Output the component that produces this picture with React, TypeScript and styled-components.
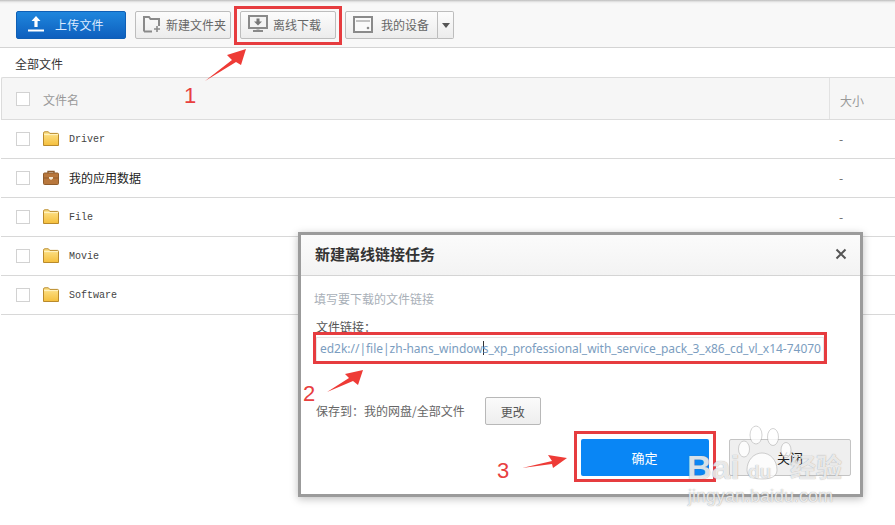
import React from "react";
import styled, { createGlobalStyle } from "styled-components";

const Global = createGlobalStyle`
  html, body { margin: 0; padding: 0; background: #fff; }
  body { font-family: "Noto Sans CJK SC", "Liberation Sans", sans-serif; font-size: 12px; color: #555; }
`;
const CJK = `"Noto Sans CJK SC", "Liberation Sans", sans-serif`;

const Page = styled.div`
  position: relative; width: 895px; height: 525px; overflow: hidden; background: #fff;
`;
const Toolbar = styled.div`
  height: 48px; box-sizing: border-box; padding: 11px 0 0 16px; display: flex; gap: 9px; align-items: flex-start;
  background: linear-gradient(#bdbdbd 0, #ececec 2px, #f8f8f8 4px, #f8f8f8 100%);
  border-bottom: 1px solid #d4d4d4;
`;
const ToolButton = styled.div<{ $w: number; $joined?: boolean }>`
  width: ${p => p.$w}px; height: 28px; box-sizing: border-box; display: flex; align-items: center; gap: 5px;
  padding: 0 0 2px 7px; color: #666; font-size: 12px; white-space: nowrap;
  border: 1px solid #bdbdbd; border-radius: ${p => (p.$joined ? "2px 0 0 2px" : "2px")};
  background: linear-gradient(#fcfcfc, #ececec);
`;
const UploadButton = styled(ToolButton)`
  color: #dceaff; border-color: #0f5fb5; padding-left: 10px; gap: 10px; font-size: 12px; letter-spacing: .2px;
  background: linear-gradient(#1f86dd, #0e5fbe);
`;
const SplitGroup = styled.div`display: flex;`;
const Caret = styled.div`
  width: 16px; height: 28px; box-sizing: border-box; display: flex; align-items: center; justify-content: center;
  border: 1px solid #bdbdbd; border-left: 0; border-radius: 0 2px 2px 0; background: linear-gradient(#fcfcfc, #ececec);
  &::after { content: ""; border: 4px solid transparent; border-top: 5px solid #555; border-bottom: 0; }
`;
const Crumb = styled.div`
  height: 29px; box-sizing: border-box; padding: 8px 0 0 15px; font-size: 12px; line-height: 16px; color: #333;
`;
const Head = styled.div`
  height: 43px; box-sizing: border-box; margin-left: 1px; display: flex; align-items: center;
  background: #f6f6f6; border: 1px solid #dcdcdc; border-right: 0; border-radius: 2px 0 0 0; color: #999; padding-left: 14px;
`;
const Check = styled.span`
  width: 14px; height: 14px; box-sizing: border-box; flex: none; background: #fff; border: 1px solid #d2d2d2;
`;
const HeadName = styled.span`margin-left: 13px; flex: 1; font-size: 12px; padding-top: 2px;`;
const HeadSize = styled.span`
  width: 66px; height: 100%; box-sizing: border-box; border-left: 1px solid #e2e2e2; padding: 15px 0 0 10px; line-height: 16px;
`;
const Row = styled.div`
  height: 39px; box-sizing: border-box; margin-left: 1px; padding-left: 15px; display: flex; align-items: center;
  border-bottom: 1px solid #d8d8d8;
`;
const IconSlot = styled.span`margin-left: 13px; width: 16px; height: 16px; flex: none; display: flex;`;
const RowName = styled.span<{ $cjk?: boolean }>`
  margin-left: 10px; flex: 1; color: ${p => (p.$cjk ? "#222" : "#444")};
  font: ${p => (p.$cjk ? `12px ${CJK}` : `10px "Liberation Mono", monospace`)};
  padding: ${p => (p.$cjk ? "0 0 2px" : "1px 0 0")};
`;
const RowSize = styled.span`width: 56px; color: #666; padding-bottom: 2px;`;

const Dialog = styled.div`
  position: absolute; left: 298px; top: 232px; width: 565px; height: 265px; box-sizing: border-box;
  border: 3px solid #9b9b9b; background: #fff; box-shadow: 0 2px 8px rgba(0,0,0,.25);
  display: flex; flex-direction: column;
`;
const DialogHead = styled.div`
  height: 41px; flex: none; box-sizing: border-box; display: flex; align-items: center; justify-content: space-between;
  padding: 0 13px 3px 14px; border-bottom: 1px solid #d4d4d4; background: linear-gradient(#fbfbfb, #f3f3f3);
`;
const DialogTitle = styled.span`font-size: 15px; font-weight: 700; color: #333;`;
const DialogBody = styled.div`padding: 14px 0 0 13px; flex: 1; display: flex; flex-direction: column;`;
const Hint = styled.div`color: #a9b0b8; font-size: 12px; line-height: 18px;`;
const Label = styled.div`margin: 11px 0 0 2px; color: #555; font-size: 12px; line-height: 16px;`;
const LinkField = styled.div`
  margin: 2px 0 0 2px; width: 508px; height: 26px; box-sizing: border-box; display: flex; align-items: center; padding: 0 0 4px 3px;
  border: 1px solid #e6e6e6; color: #7b9dc0; font: 12px "Noto Sans", sans-serif; white-space: nowrap; letter-spacing: -0.02px;
`;
const TextCaret = styled.i`display: inline-block; width: 1px; height: 14px; margin-right: -1px; background: #333; vertical-align: -2px;`;
const SaveRow = styled.div`margin: 34px 0 0 2px; display: flex; align-items: center; gap: 20px; color: #666;`;
const SaveText = styled.span`padding-bottom: 2px;`;
const ChangeBtn = styled.div`
  width: 56px; height: 28px; box-sizing: border-box; display: flex; align-items: center; justify-content: center;
  border: 1px solid #b8b8b8; border-radius: 2px; background: linear-gradient(#fbfbfb, #eeeeee); color: #555;
`;
const Actions = styled.div`margin: 14px 0 0 267px; display: flex; gap: 20px;`;
const Primary = styled.div`
  width: 128px; height: 37px; box-sizing: border-box; padding-right: 1px; display: flex; align-items: center; justify-content: center;
  background: #0986f5; border-radius: 2px; color: #fff; font-size: 13px;
`;
const Secondary = styled.div`
  width: 122px; height: 37px; box-sizing: border-box; display: flex; align-items: center; justify-content: center;
  background: #efefef; border: 1px solid #c4c4c4; border-radius: 2px; color: #222; font-size: 13px;
`;
const RedFrame = styled.div<{ $x: number; $y: number; $w: number; $h: number }>`
  position: absolute; left: ${p => p.$x}px; top: ${p => p.$y}px; width: ${p => p.$w}px; height: ${p => p.$h}px;
  box-sizing: border-box; border: 3px solid #e63c3f;
`;
const Num = styled.span<{ $x: number; $y: number }>`
  position: absolute; left: ${p => p.$x}px; top: ${p => p.$y}px; color: #e8403f;
  font: 22px/24px "Liberation Sans", sans-serif;
`;
const Overlay = styled.svg`position: absolute; left: 0; top: 0; pointer-events: none;`;
const Mark = styled.span<{ $x: number; $y: number; $s: number; $light?: boolean }>`
  position: absolute; left: ${p => p.$x}px; top: ${p => p.$y}px; font-size: ${p => p.$s}px; line-height: 1;
  font-weight: ${p => (p.$light ? 400 : 700)};
  color: rgba(255,255,255,.78); white-space: nowrap; font-family: "Liberation Sans", ${CJK};
  text-shadow: 0 0 1px rgba(110,110,110,.7);
`;

const Folder = () => (
  <svg width="16" height="16" viewBox="0 0 16 16">
    <defs><linearGradient id="fg" x1="0" y1="0" x2="0" y2="1"><stop offset="0" stopColor="#fde48f" /><stop offset="1" stopColor="#f5bf3c" /></linearGradient></defs>
    <path d="M.5 2.2C.5 1.3 1 .8 1.8.8h3.6l1.4 1.6h7.7c.7 0 1 .4 1 1v11.1H.5z" fill="url(#fg)" stroke="#b98a2c" />
    <path d="M1 3.6h14" stroke="#fff3c4" />
  </svg>
);
const Case = () => (
  <svg width="16" height="16" viewBox="0 0 16 16">
    <path d="M5 3V1.5h6V3" fill="none" stroke="#8a5a2c" strokeWidth="1.4" />
    <rect x=".5" y="3" width="15" height="11.5" rx="1" fill="#b8773c" stroke="#8f5c2c" />
    <path d="M.5 8h15" stroke="#8f5c2c" />
    <path d="M6 7h4v1.5L8 10 6 8.5z" fill="#f5e8d2" />
  </svg>
);

const files = [
  { n: "Driver" }, { n: "我的应用数据", cjk: true, c: true }, { n: "File" }, { n: "Movie" }, { n: "Software" },
];

export default function App() {
  return (
    <Page>
      <Global />
      <Toolbar>
        <UploadButton $w={110}>
          <svg width="18" height="16" viewBox="0 0 18 16">
            <path d="M9 0l4.500 5H10.600v6H7.400V5H4.500z" fill="#fff" />
            <rect x="1" y="13.500" width="16" height="2" fill="#fff" />
          </svg>
          上传文件
        </UploadButton>
        <ToolButton $w={96}>
          <svg width="18" height="17" viewBox="0 0 18 17">
            <path d="M1 15.500V1h5l1.500 2H16v7" fill="none" stroke="#8a8a8a" strokeWidth="2" />
            <path d="M1 15.500h8" stroke="#8a8a8a" strokeWidth="2" />
            <path d="M14 10v6M11 13h6" stroke="#8a8a8a" strokeWidth="1.600" />
          </svg>
          新建文件夹
        </ToolButton>
        <ToolButton $w={96}>
          <svg width="20" height="18" viewBox="0 0 20 18">
            <rect x="1" y="1" width="18" height="12" fill="#f3f3f3" stroke="#8a8a8a" strokeWidth="2" />
            <path d="M8.500 3.500h3v3H14l-4 4-4-4h2.500z" fill="#777" />
            <path d="M5 16h10" stroke="#8a8a8a" strokeWidth="2" />
            <path d="M8.500 14h3" stroke="#8a8a8a" />
          </svg>
          离线下载
        </ToolButton>
        <SplitGroup>
          <ToolButton $w={93} $joined>
            <svg width="20" height="17" viewBox="0 0 20 17" style={{ marginRight: 3 }}>
              <rect x="1" y="1" width="18" height="15" fill="#fafafa" stroke="#8a8a8a" strokeWidth="2" />
              <path d="M3 5h14" stroke="#8a8a8a" />
              <circle cx="15" cy="12" r="1.300" fill="#8a8a8a" />
            </svg>
            我的设备
          </ToolButton>
          <Caret />
        </SplitGroup>
      </Toolbar>
      <Crumb>全部文件</Crumb>
      <Head>
        <Check />
        <HeadName>文件名</HeadName>
        <HeadSize>大小</HeadSize>
      </Head>
      {files.map(f => (
        <Row key={f.n}>
          <Check />
          <IconSlot>{f.c ? <Case /> : <Folder />}</IconSlot>
          <RowName $cjk={f.cjk}>{f.n}</RowName>
          <RowSize>-</RowSize>
        </Row>
      ))}

      <Dialog>
        <DialogHead>
          <DialogTitle>新建离线链接任务</DialogTitle>
          <svg width="12" height="12" viewBox="0 0 12 12"><path d="M1.500 1.500l9 9M10.500 1.500l-9 9" stroke="#555" strokeWidth="2" /></svg>
        </DialogHead>
        <DialogBody>
          <Hint>填写要下载的文件链接</Hint>
          <Label>文件链接：</Label>
          <LinkField>
            <span>ed2k://|file|zh-hans_window<TextCaret />s_xp_professional_with_service_pack_3_x86_cd_vl_x14-74070</span>
          </LinkField>
          <SaveRow>
            <SaveText>保存到：我的网盘/全部文件</SaveText>
            <ChangeBtn>更改</ChangeBtn>
          </SaveRow>
          <Actions>
            <Primary>确定</Primary>
            <Secondary>关闭</Secondary>
          </Actions>
        </DialogBody>
      </Dialog>

      <RedFrame $x={234} $y={6} $w={108} $h={39} />
      <RedFrame $x={313} $y={332} $w={514} $h={32} />
      <RedFrame $x={574} $y={431} $w={142} $h={51} />
      <Num $x={184} $y={84}>1</Num>
      <Num $x={303} $y={382}>2</Num>
      <Num $x={497} $y={459}>3</Num>

      <Overlay width="895" height="525" viewBox="0 0 895 525">
        <path d="M205 81L232 60 227 55 246 49 241 65 236 62z" fill="#ee3b36" />
        <path d="M327 392L349 378 345 374 363 370 358 385 353 381z" fill="#ee3b36" />
        <path d="M522 468L552 461 548 455 567 458 553 468 552 464z" fill="#ee3b36" />
        <g fill="rgba(255,255,255,.78)" stroke="rgba(130,130,130,.5)" strokeWidth=".7">
          <ellipse cx="756" cy="435" rx="6" ry="9" />
          <ellipse cx="773" cy="437" rx="5.500" ry="8.500" />
          <ellipse cx="744" cy="449" rx="5.500" ry="8" />
          <ellipse cx="786" cy="450" rx="5" ry="7.500" />
          <path d="M747 470c0-10 7-17 15-17s15 7 15 17c0 6-5 9-15 9s-15-3-15-9z" />
        </g>
      </Overlay>
      <Mark $x={687} $y={450} $s={34}>Bai</Mark>
      <Mark $x={748} $y={462} $s={19}>du</Mark>
      <Mark $x={790} $y={455} $s={26}>经验</Mark>
      <Mark $x={688} $y={487} $s={18} $light>jingyan.baidu.com</Mark>
    </Page>
  );
}
